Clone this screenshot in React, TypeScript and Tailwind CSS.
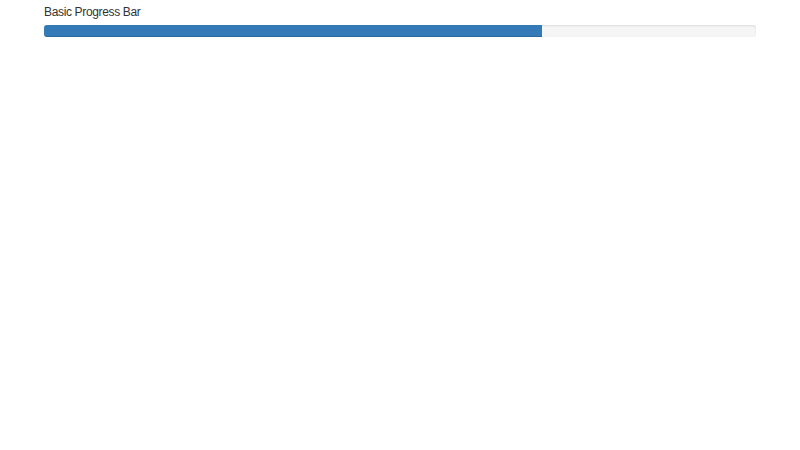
export default function App() {
  const value = 70;

  return (
    <div className="min-h-[450px] bg-white px-[44px] pt-[4px] font-['Liberation_Sans',Arial,sans-serif] text-[#333]">
      <div className="text-[12px] leading-[17px] tracking-[-0.35px]">Basic Progress Bar</div>
      <div className="mt-[4px] h-[12px] w-full overflow-hidden rounded-[3px] bg-[#f5f5f5] shadow-[inset_0_1px_2px_rgba(0,0,0,0.1)]">
        <div
          className="h-full bg-[#337ab7] shadow-[inset_0_-1px_0_rgba(0,0,0,0.15)]"
          style={{ width: `${value}%` }}
        />
      </div>
    </div>
  );
}
